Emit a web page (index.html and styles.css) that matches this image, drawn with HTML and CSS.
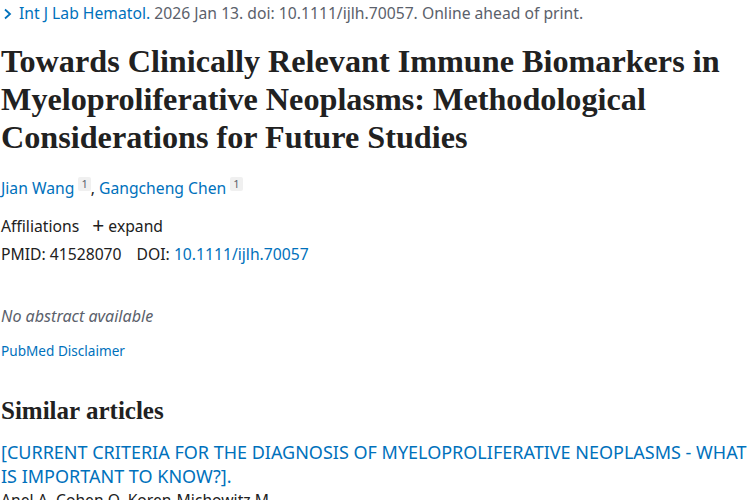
FILE: index.html
```html
<!DOCTYPE html>
<html>
<head>
<meta charset="utf-8">
<link rel="stylesheet" href="styles.css">
</head>
<body>
<main class="article">
  <div class="cite">
    <a class="journal" href="#"><svg class="chev" width="10" height="12" viewBox="0 0 10 12"><path d="M2 1.5 L7 6 L2 10.5" fill="none" stroke="#0071bc" stroke-width="1.8"/></svg>Int J Lab Hematol.</a> 2026 Jan 13. doi: 10.1111/ijlh.70057. Online ahead of print.
  </div>
  <h1 class="title">Towards Clinically Relevant Immune Biomarkers in Myeloproliferative Neoplasms: Methodological Considerations for Future Studies</h1>
  <div class="authors">
    <a href="#">Jian Wang</a> <sup class="aff">1</sup>, <a href="#">Gangcheng Chen</a> <sup class="aff">1</sup>
  </div>
  <div class="affil">Affiliations <span class="expand"><span class="plus">+</span> expand</span></div>
  <div class="ids"><span class="pmid">PMID: 41528070</span><span>DOI: <a href="#">10.1111/ijlh.70057</a></span></div>
  <div class="noabs">No abstract available</div>
  <a class="disclaimer" href="#">PubMed Disclaimer</a>
  <h2 class="similar">Similar articles</h2>
  <a class="sim-title" href="#">[CURRENT CRITERIA FOR THE DIAGNOSIS OF MYELOPROLIFERATIVE NEOPLASMS - WHAT IS IMPORTANT TO KNOW?].</a>
  <div class="sim-authors">Anel A, Cohen O, Koren-Michowitz M.</div>
</main>
</body>
</html>
```
FILE: styles.css
```css
html, body { margin: 0; padding: 0; background: #fff; }
body { font-family: "Noto Sans", "Open Sans", sans-serif; color: #212121; overflow: hidden; }
a { color: #0071bc; text-decoration: none; }
.article { padding: 0 0 0 1px; display: flex; flex-direction: column; align-items: flex-start; }
.cite { font-size: 15.7px; line-height: 26px; color: #5b616b; margin-top: 0; }
.chev { margin: 0 6px 0 2px; vertical-align: -1px; }
.title { font-family: "Liberation Serif", serif; font-weight: bold; font-size: 32.2px; line-height: 38px; margin: 16px 0 0 0; color: #212121; }
.authors { font-size: 15.7px; line-height: 24px; margin-top: 20px; }
.aff { display: inline-block; font-size: 11px; line-height: 14px; background: #f0f0f0; color: #5b616b; padding: 0 3px; border-radius: 2px; vertical-align: 6px; }
.affil { font-size: 15.7px; line-height: 24px; margin-top: 14px; }
.expand { margin-left: 9px; }
.plus { font-size: 21px; line-height: 10px; vertical-align: -1px; }
.ids { font-size: 15.7px; line-height: 24px; margin-top: 4px; display: flex; gap: 15px; }
.noabs { font-size: 16.1px; line-height: 24px; margin-top: 38px; font-style: italic; color: #5b616b; }
.disclaimer { font-size: 13.6px; line-height: 20px; margin-top: 13px; }
.similar { font-family: "Liberation Serif", serif; font-weight: bold; font-size: 25px; line-height: 28px; margin: 36px 0 0 0; }
.sim-title { font-size: 18px; line-height: 24px; margin-top: 15px; }
.sim-authors { font-size: 15.7px; line-height: 24px; }
```
